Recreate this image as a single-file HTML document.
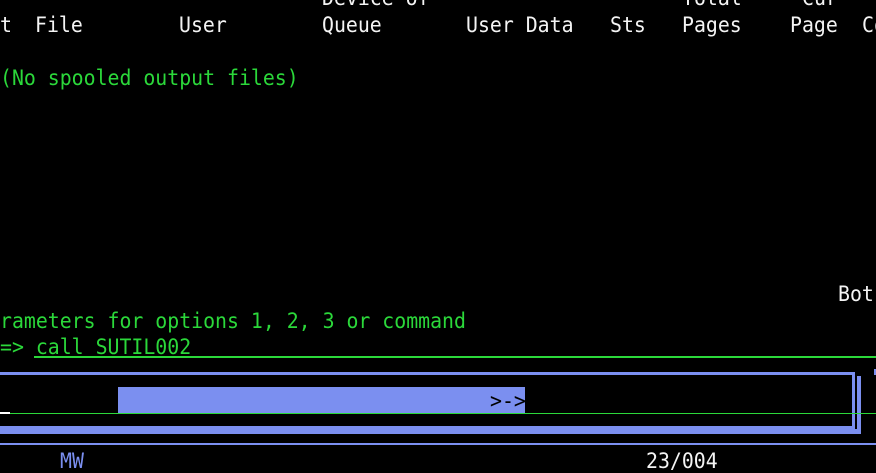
<!DOCTYPE html>
<html><head><meta charset="utf-8"><style>
html,body{margin:0;padding:0;background:#000;}
body{width:876px;height:460px;position:relative;overflow:hidden;font-family:"DejaVu Sans Mono","Liberation Mono",monospace;}
.t{position:absolute;font-size:19.85px;line-height:20px;white-space:pre;transform:scaleY(1.08);transform-origin:0 15.5px;}
.w{color:#f4f4f4}.g{color:#2bd83a}.b{color:#7b8ff0}.k{color:#000}
.r{position:absolute}
</style></head><body>
<div class="t w" style="left:322px;top:-11px">Device of</div>
<div class="t w" style="left:682px;top:-11px">Total</div>
<div class="t w" style="left:802px;top:-11px">Cur</div>
<div class="t w" style="left:0;top:16px">t</div>
<div class="t w" style="left:35px;top:16px">File</div>
<div class="t w" style="left:179px;top:16px">User</div>
<div class="t w" style="left:322px;top:16px">Queue</div>
<div class="t w" style="left:466px;top:16px">User Data</div>
<div class="t w" style="left:610px;top:16px">Sts</div>
<div class="t w" style="left:682px;top:16px">Pages</div>
<div class="t w" style="left:790px;top:16px">Page</div>
<div class="t w" style="left:862px;top:16px">Co</div>
<div class="t g" style="left:0;top:69px">(No spooled output files)</div>
<div class="t w" style="left:838px;top:285px">Bot</div>
<div class="t g" style="left:0;top:312px">rameters for options 1, 2, 3 or command</div>
<div class="t g" style="left:0;top:338px">=&gt; call SUTIL002</div>
<div class="r" style="left:34px;top:356px;width:842px;height:2px;background:#2bd83a"></div>

<div class="r" style="left:0;top:372px;width:855px;height:3px;background:#7b8ff0"></div>
<div class="r" style="left:852px;top:372px;width:3px;height:57px;background:#7b8ff0"></div>
<div class="r" style="left:0;top:426px;width:855px;height:3px;background:#7b8ff0"></div>
<div class="r" style="left:857px;top:376px;width:4px;height:58px;background:#7b8ff0"></div>
<div class="r" style="left:0;top:429px;width:861px;height:5px;background:#7b8ff0"></div>
<div class="r" style="left:0;top:443px;width:876px;height:2px;background:#7b8ff0"></div>
<div class="r" style="left:874px;top:369px;width:2px;height:6px;background:#7b8ff0"></div>

<div class="r" style="left:10px;top:413px;width:866px;height:1px;background:#2bd83a"></div>
<div class="r" style="left:0;top:412px;width:10px;height:2px;background:#fff"></div>
<div class="r" style="left:118px;top:387px;width:407px;height:26px;background:#7b8ff0"></div>
<div class="t k" style="left:490px;top:392px">&gt;-&gt;</div>

<div class="t b" style="left:60px;top:452px">MW</div>
<div class="t w" style="left:646px;top:452px">23/004</div>
</body></html>
